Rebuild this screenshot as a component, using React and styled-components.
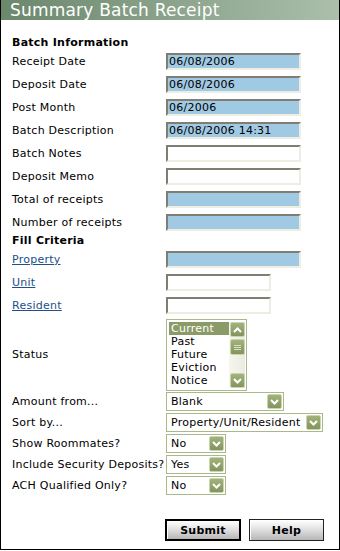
import React from 'react';
import styled, { createGlobalStyle } from 'styled-components';

const Global = createGlobalStyle`
  html, body { margin: 0; padding: 0; background: #fff; }
  body { font-family: "DejaVu Sans", Verdana, sans-serif; font-size: 11px; color: #000; letter-spacing: 0.25px; }
`;

const Panel = styled.div`
  width: 340px;
  height: 550px;
  box-sizing: border-box;
  border: 1px solid #000;
  border-top: none;
  display: flex;
  flex-direction: column;
`;

const Header = styled.div`
  height: 20px;
  background: linear-gradient(to right, #6b876c, #abbfab);
  color: #fff;
  font-size: 17px;
  letter-spacing: 0.2px;
  line-height: 20px;
  padding-left: 9px;
  white-space: nowrap;
  overflow: hidden;
`;

const Form = styled.div`
  padding: 16px 0 0 11px;
  display: flex;
  flex-direction: column;
`;

const Heading = styled.div`
  height: 14px;
  line-height: 14px;
  font-weight: bold;
  font-size: 11px;
`;

const Row = styled.div`
  display: grid;
  grid-template-columns: 154px auto;
  align-items: ${p => (p.$top ? 'start' : 'center')};
  height: ${p => p.$h}px;
`;

const Label = styled.div`
  font-size: 11px;
  line-height: 13px;
  white-space: nowrap;
  align-self: center;
`;

const LinkLabel = styled.a`
  font-size: 11px;
  line-height: 13px;
  color: #21508a;
  text-decoration: underline;
  align-self: center;
  justify-self: start;
`;

const TextBox = styled.input`
  box-sizing: border-box;
  width: ${p => p.$w}px;
  height: 17px;
  margin: 0;
  padding: 0 0 0 1px;
  border: 2px solid;
  border-color: #807e72 #eeede2 #eeede2 #807e72;
  background: ${p => (p.$filled ? '#a0c9e3' : '#fff')};
  font-family: "DejaVu Sans", Verdana, sans-serif;
  font-size: 11px;
  letter-spacing: 0.25px;
  color: #000;
  outline: none;
`;

const SelectBox = styled.div`
  box-sizing: border-box;
  width: ${p => p.$w}px;
  height: 19px;
  margin-top: 1px;
  align-self: start;
  border: 1px solid #a9b98a;
  background: #fff;
  display: flex;
  align-items: center;
  padding-left: 4px;
  padding-right: 1px;
  font-size: 11px;
`;

const SelectText = styled.span`
  flex: 1;
  white-space: nowrap;
  overflow: hidden;
`;

const OliveBtn = styled.div`
  box-sizing: border-box;
  width: ${p => p.$w || 15}px;
  height: ${p => p.$h || 15}px;
  margin-top: ${p => p.$mt || 0}px;
  background: linear-gradient(to bottom, #a2b27c, #83955c);
  border: 1px solid #c9d4b1;
  border-radius: 2px;
  display: flex;
  align-items: center;
  justify-content: center;
  flex-shrink: 0;
`;

const ListBox = styled.div`
  box-sizing: border-box;
  width: 81px;
  height: 72px;
  margin-top: 2px;
  border: 1px solid #a9b98a;
  background: #fff;
  display: flex;
  padding: 2px 1px 2px 2px;
`;

const Items = styled.div`
  flex: 1;
  display: flex;
  flex-direction: column;
`;

const Item = styled.div`
  height: 13px;
  line-height: 13px;
  padding-left: 2px;
  font-size: 11px;
  white-space: nowrap;
  background: ${p => (p.$sel ? '#8b9b68' : 'transparent')};
  color: ${p => (p.$sel ? '#fff' : '#000')};
`;

const ScrollTrack = styled.div`
  width: 16px;
  display: flex;
  flex-direction: column;
  align-items: center;
  background: linear-gradient(to right, #f7f6ee, #ecebdf);
`;

const Spacer = styled.div`
  flex: 1;
`;

const ButtonRow = styled.div`
  display: flex;
  gap: 8px;
  margin-top: 23px;
  padding-left: 153px;
`;

const Button = styled.button`
  box-sizing: border-box;
  width: ${p => p.$w}px;
  height: 22px;
  margin: 0;
  padding: 0;
  border: ${p => (p.$default ? '2px solid #000' : '1px solid #222')};
  box-shadow: inset 1px 1px 0 #fff;
  background: linear-gradient(to bottom, #ffffff, #e2e2e2 45%, #b6b6b6);
  font-family: "DejaVu Sans", Verdana, sans-serif;
  font-weight: bold;
  font-size: 11px;
  letter-spacing: 0.25px;
  color: #000;
`;

const Chevron = ({ up }) => (
  <svg width="9" height="6" viewBox="0 0 9 6">
    <path
      d={up ? 'M1 5 L4.5 1.5 L8 5' : 'M1 1 L4.5 4.5 L8 1'}
      fill="none"
      stroke="#fff"
      strokeWidth="2"
    />
  </svg>
);

const Grip = () => (
  <svg width="7" height="7" viewBox="0 0 7 7">
    <path d="M0 1.5 H7 M0 3.5 H7 M0 5.5 H7" stroke="#d8e0c8" strokeWidth="1" />
  </svg>
);

const Select = ({ w, value }) => (
  <SelectBox $w={w}>
    <SelectText>{value}</SelectText>
    <OliveBtn>
      <Chevron />
    </OliveBtn>
  </SelectBox>
);

const textRows = [
  ['Receipt Date', '06/08/2006', true],
  ['Deposit Date', '06/08/2006', true],
  ['Post Month', '06/2006', true],
  ['Batch Description', '06/08/2006 14:31', true],
  ['Batch Notes', '', false],
  ['Deposit Memo', '', false],
  ['Total of receipts', '', true],
  ['Number of receipts', '', true],
];

const statuses = ['Current', 'Past', 'Future', 'Eviction', 'Notice'];

export default function App() {
  return (
    <>
      <Global />
      <Panel>
        <Header>Summary Batch Receipt</Header>
        <Form>
          <Heading>Batch Information</Heading>
          {textRows.map(([label, value, filled]) => (
            <Row key={label} $h={23}>
              <Label>{label}</Label>
              <TextBox $w={135} $filled={filled} readOnly defaultValue={value} />
            </Row>
          ))}
          <Heading>Fill Criteria</Heading>
          <Row $h={23}>
            <LinkLabel href="#">Property</LinkLabel>
            <TextBox $w={135} $filled readOnly defaultValue="" />
          </Row>
          <Row $h={23}>
            <LinkLabel href="#">Unit</LinkLabel>
            <TextBox $w={105} readOnly defaultValue="" />
          </Row>
          <Row $h={23}>
            <LinkLabel href="#">Resident</LinkLabel>
            <TextBox $w={105} readOnly defaultValue="" />
          </Row>
          <Row $h={74} $top>
            <Label>Status</Label>
            <ListBox>
              <Items>
                {statuses.map((s, i) => (
                  <Item key={s} $sel={i === 0}>{s}</Item>
                ))}
              </Items>
              <ScrollTrack>
                <OliveBtn $w={15} $h={15}><Chevron up /></OliveBtn>
                <OliveBtn $w={15} $h={16} $mt={2}><Grip /></OliveBtn>
                <Spacer />
                <OliveBtn $w={15} $h={15}><Chevron /></OliveBtn>
              </ScrollTrack>
            </ListBox>
          </Row>
          <Row $h={21} $top>
            <Label>Amount from...</Label>
            <Select w={118} value="Blank" />
          </Row>
          <Row $h={21} $top>
            <Label>Sort by...</Label>
            <Select w={157} value="Property/Unit/Resident" />
          </Row>
          <Row $h={21} $top>
            <Label>Show Roommates?</Label>
            <Select w={60} value="No" />
          </Row>
          <Row $h={21} $top>
            <Label>Include Security Deposits?</Label>
            <Select w={60} value="Yes" />
          </Row>
          <Row $h={21} $top>
            <Label>ACH Qualified Only?</Label>
            <Select w={60} value="No" />
          </Row>
          <ButtonRow>
            <Button $w={76} $default>Submit</Button>
            <Button $w={75}>Help</Button>
          </ButtonRow>
        </Form>
      </Panel>
    </>
  );
}
